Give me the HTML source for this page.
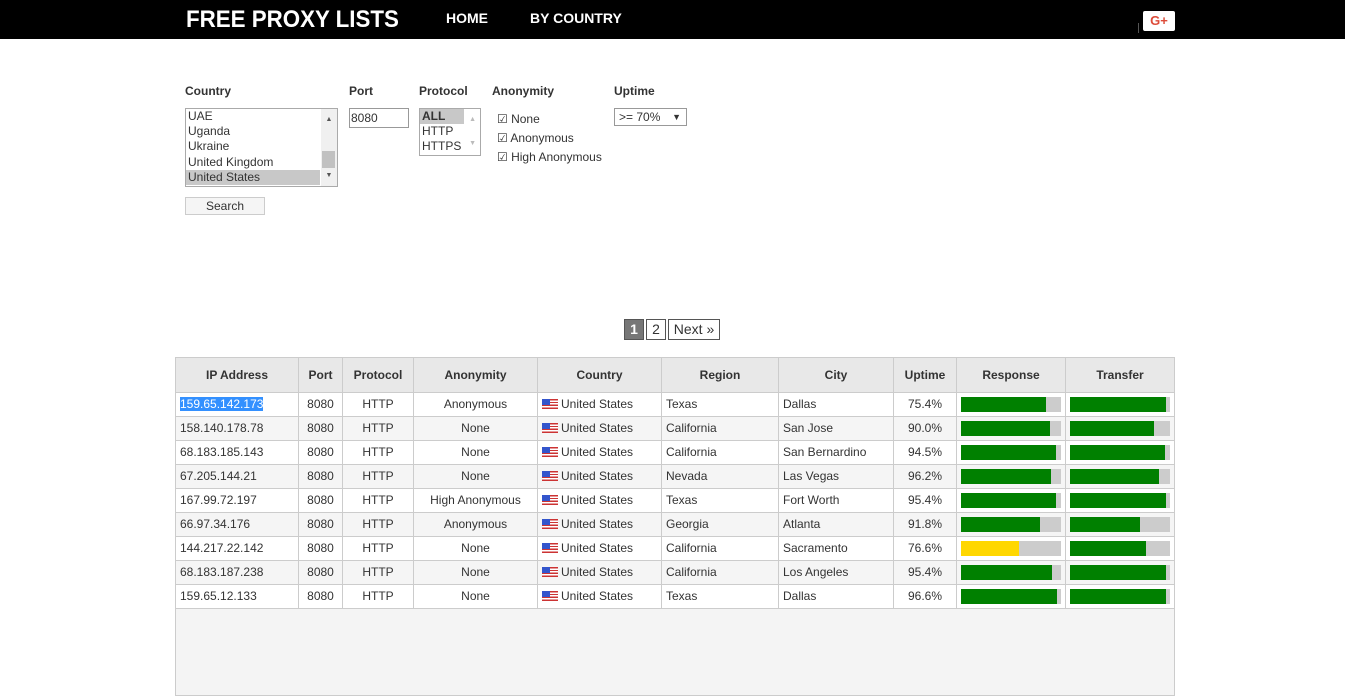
<!DOCTYPE html>
<html><head><meta charset="utf-8"><style>
*{box-sizing:border-box;margin:0;padding:0}
body{width:1345px;height:696px;overflow:hidden;background:#fff;font-family:"Liberation Sans",Arial,sans-serif;font-size:12px;color:#333;position:relative}
.top{position:absolute;left:0;top:0;width:1345px;height:39px;background:#000}
.logo{position:absolute;left:186px;top:6px;color:#fff;font-size:24px;font-weight:bold;letter-spacing:0;font-family:"Liberation Sans",sans-serif;transform:scaleX(0.93);transform-origin:left;white-space:nowrap;line-height:28px}
.nav{position:absolute;top:10px;color:#fff;font-size:14px;font-weight:bold}
.gp{position:absolute;left:1143px;top:11px;width:32px;height:20px;background:#fff;border-radius:2px;color:#dd4b39;font-weight:bold;font-size:13px;text-align:center;line-height:20px}
.lbl{position:absolute;top:84px;font-weight:bold;font-size:12px}
.abs{position:absolute}
table{position:absolute;left:175px;top:357px;border-collapse:collapse;font-size:12px}
td,th{border:1px solid #ccc;height:24px;text-align:center;padding:0 0 2px 0}
th{background:#e8e8e8;height:35px;font-weight:bold;padding:0}
tr:nth-child(odd) td{background:#f5f5f5}
td.l{text-align:left;padding-left:4px}
.bar{width:100px;height:15px;background:#ccc;margin-left:4px;position:relative;top:1px}
.bar i{position:absolute;left:0;top:0;height:15px;background:#008000}
.flag{display:inline-block;width:16px;height:10px;vertical-align:-1px;margin-right:3px;background:repeating-linear-gradient(#c33 0 1.4px,#fff 1.4px 2.8px);position:relative}
.flag:after{content:"";position:absolute;left:0;top:0;width:8px;height:6px;background:#35c}
</style></head><body>
<div class="top"></div>
<div class="logo">FREE PROXY LISTS</div>
<div class="nav" style="left:446px">HOME</div>
<div class="nav" style="left:530px">BY COUNTRY</div>
<div class="abs" style="left:1138px;top:23px;width:1px;height:10px;background:#555"></div>
<div class="gp">G+</div>

<div class="lbl" style="left:185px">Country</div>
<div class="lbl" style="left:349px">Port</div>
<div class="lbl" style="left:419px">Protocol</div>
<div class="lbl" style="left:492px">Anonymity</div>
<div class="lbl" style="left:614px">Uptime</div>

<div class="abs" style="left:185px;top:108px;width:153px;height:79px;border:1px solid #aaa;font-size:12px;line-height:15.2px;background:#fff">
<div style="padding-left:2px">UAE</div><div style="padding-left:2px">Uganda</div><div style="padding-left:2px">Ukraine</div><div style="padding-left:2px">United Kingdom</div><div style="padding-left:2px;background:#c8c8c8;width:134px">United States</div>
<div class="abs" style="right:0;top:0;width:16px;height:77px;background:#f0f0f0"><div style="text-align:center;font-size:7px;color:#555;margin-top:3px">▲</div><div class="abs" style="left:1px;top:42px;width:13px;height:17px;background:#c1c1c1"></div><div class="abs" style="left:0;bottom:3px;width:16px;text-align:center;font-size:7px;color:#555">▼</div></div>
</div>
<div class="abs" style="left:185px;top:197px;width:80px;height:18px;border:1px solid #ccc;background:#f5f5f5;text-align:center;line-height:16px">Search</div>

<div class="abs" style="left:349px;top:108px;width:60px;height:20px;border:1px solid #999;padding-left:1px;line-height:18px">8080</div>

<div class="abs" style="left:419px;top:108px;width:62px;height:48px;border:1px solid #aaa;line-height:15px">
<div style="padding-left:2px;background:#c8c8c8;width:44px;font-weight:bold">ALL</div><div style="padding-left:2px">HTTP</div><div style="padding-left:2px">HTTPS</div>
<div class="abs" style="right:4px;top:3px;font-size:7px;color:#bbb">▲</div><div class="abs" style="right:4px;bottom:4px;font-size:7px;color:#bbb">▼</div></div>

<div class="abs" style="left:497px;top:110px;line-height:19px">
<div>☑ None</div><div>☑ Anonymous</div><div>☑ High Anonymous</div></div>

<div class="abs" style="left:614px;top:108px;width:73px;height:18px;border:1px solid #999;line-height:16px;padding-left:4px">&gt;= 70%<span style="position:absolute;right:5px;font-size:9px">▼</span></div>

<div class="abs" style="left:624px;top:319px;width:20px;height:21px;background:#777;border:1px solid #555;color:#fff;text-align:center;line-height:19px;font-size:14px;font-weight:bold">1</div>
<div class="abs" style="left:646px;top:319px;width:20px;height:21px;border:1px solid #555;text-align:center;line-height:19px;font-size:14px">2</div>
<div class="abs" style="left:668px;top:319px;width:52px;height:21px;border:1px solid #555;text-align:center;line-height:19px;font-size:14px">Next »</div>

<div class="abs" style="left:175px;top:608px;width:1000px;height:88px;background:#f4f4f4;border:1px solid #ccc;border-top:none"></div>

<table>
<tr><th style="width:123px">IP Address</th><th style="width:44px">Port</th><th style="width:71px">Protocol</th><th style="width:124px">Anonymity</th><th style="width:124px">Country</th><th style="width:117px">Region</th><th style="width:115px">City</th><th style="width:63px">Uptime</th><th style="width:109px">Response</th><th style="width:109px">Transfer</th></tr>
<tr><td class="l"><span style="background:#3390ff;color:#fff">159.65.142.173</span></td><td>8080</td><td>HTTP</td><td>Anonymous</td><td class="l"><span class="flag"></span>United States</td><td class="l">Texas</td><td class="l">Dallas</td><td>75.4%</td><td><div class="bar"><i style="width:85px"></i></div></td><td><div class="bar"><i style="width:96px"></i></div></td></tr>
<tr><td class="l">158.140.178.78</td><td>8080</td><td>HTTP</td><td>None</td><td class="l"><span class="flag"></span>United States</td><td class="l">California</td><td class="l">San Jose</td><td>90.0%</td><td><div class="bar"><i style="width:89px"></i></div></td><td><div class="bar"><i style="width:84px"></i></div></td></tr>
<tr><td class="l">68.183.185.143</td><td>8080</td><td>HTTP</td><td>None</td><td class="l"><span class="flag"></span>United States</td><td class="l">California</td><td class="l">San Bernardino</td><td>94.5%</td><td><div class="bar"><i style="width:95px"></i></div></td><td><div class="bar"><i style="width:95px"></i></div></td></tr>
<tr><td class="l">67.205.144.21</td><td>8080</td><td>HTTP</td><td>None</td><td class="l"><span class="flag"></span>United States</td><td class="l">Nevada</td><td class="l">Las Vegas</td><td>96.2%</td><td><div class="bar"><i style="width:90px"></i></div></td><td><div class="bar"><i style="width:89px"></i></div></td></tr>
<tr><td class="l">167.99.72.197</td><td>8080</td><td>HTTP</td><td>High Anonymous</td><td class="l"><span class="flag"></span>United States</td><td class="l">Texas</td><td class="l">Fort Worth</td><td>95.4%</td><td><div class="bar"><i style="width:95px"></i></div></td><td><div class="bar"><i style="width:96px"></i></div></td></tr>
<tr><td class="l">66.97.34.176</td><td>8080</td><td>HTTP</td><td>Anonymous</td><td class="l"><span class="flag"></span>United States</td><td class="l">Georgia</td><td class="l">Atlanta</td><td>91.8%</td><td><div class="bar"><i style="width:79px"></i></div></td><td><div class="bar"><i style="width:70px"></i></div></td></tr>
<tr><td class="l">144.217.22.142</td><td>8080</td><td>HTTP</td><td>None</td><td class="l"><span class="flag"></span>United States</td><td class="l">California</td><td class="l">Sacramento</td><td>76.6%</td><td><div class="bar"><i style="width:58px;background:#ffd700"></i></div></td><td><div class="bar"><i style="width:76px"></i></div></td></tr>
<tr><td class="l">68.183.187.238</td><td>8080</td><td>HTTP</td><td>None</td><td class="l"><span class="flag"></span>United States</td><td class="l">California</td><td class="l">Los Angeles</td><td>95.4%</td><td><div class="bar"><i style="width:91px"></i></div></td><td><div class="bar"><i style="width:96px"></i></div></td></tr>
<tr><td class="l">159.65.12.133</td><td>8080</td><td>HTTP</td><td>None</td><td class="l"><span class="flag"></span>United States</td><td class="l">Texas</td><td class="l">Dallas</td><td>96.6%</td><td><div class="bar"><i style="width:96px"></i></div></td><td><div class="bar"><i style="width:96px"></i></div></td></tr>
</table>
</body></html>
